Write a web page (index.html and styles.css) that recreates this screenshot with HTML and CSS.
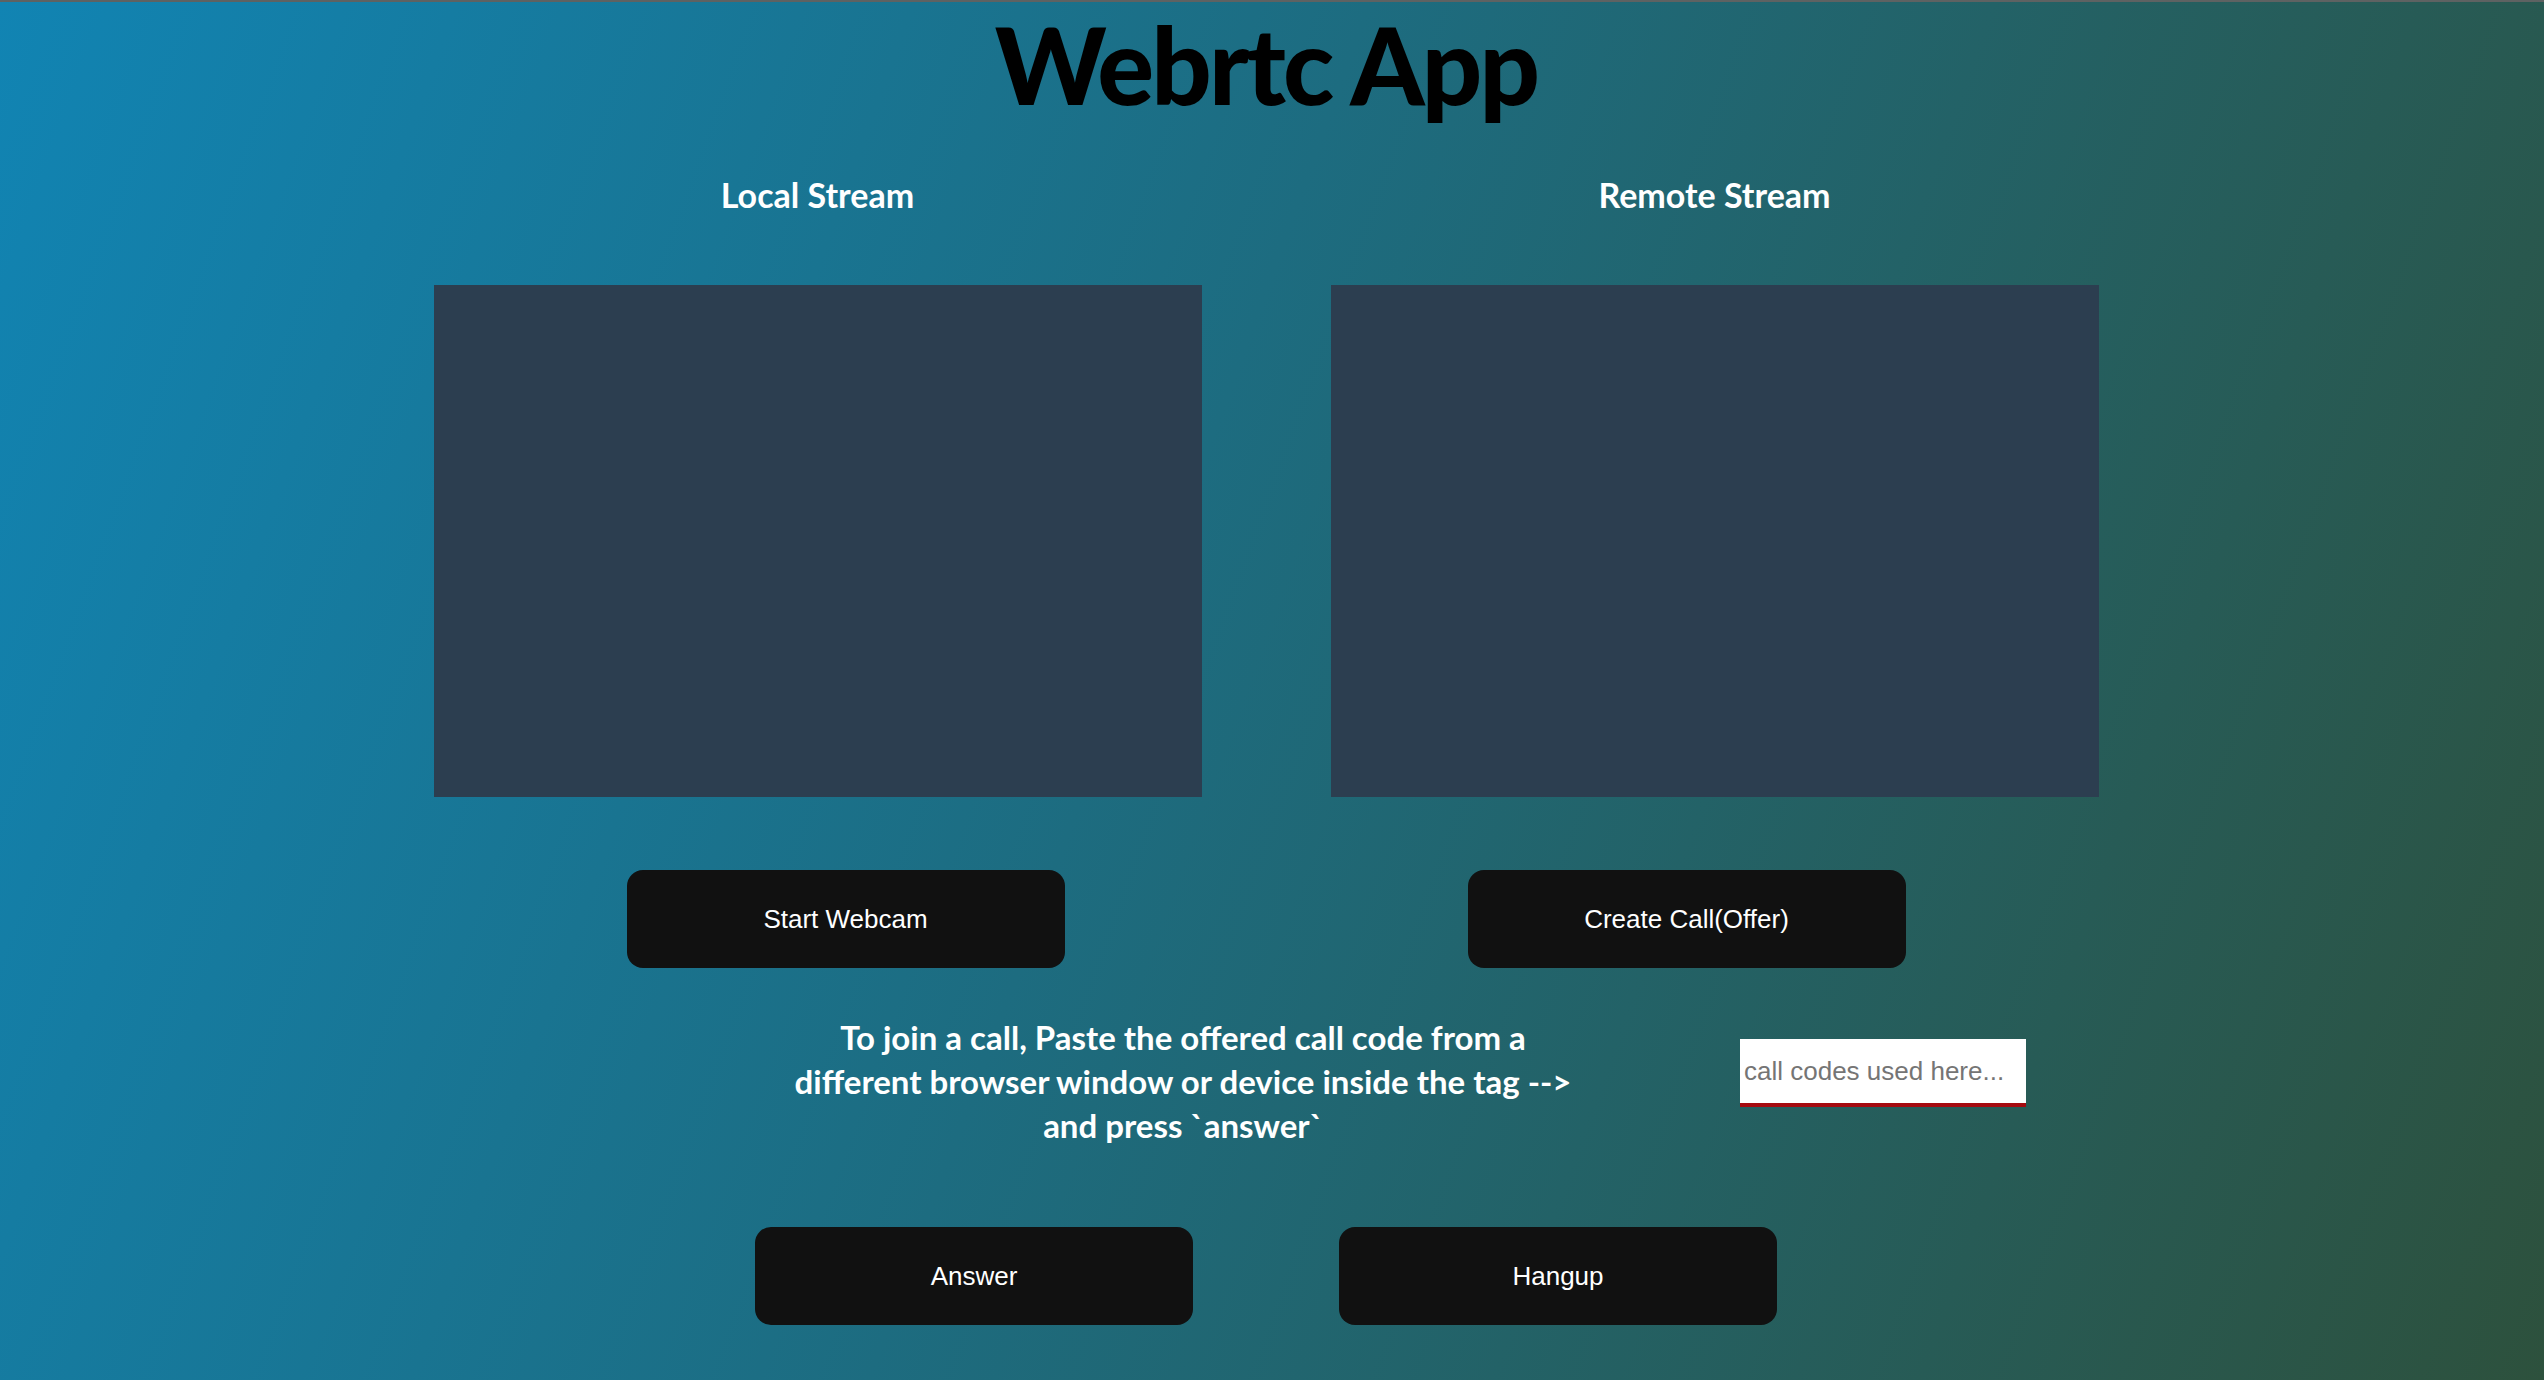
FILE: index.html
```html
<!DOCTYPE html>
<html lang="en">
<head>
<meta charset="utf-8">
<title>Webrtc App</title>
<link rel="stylesheet" href="styles.css">
</head>
<body>
<div class="topline"></div>
<main class="app">
  <h1 class="title">Webrtc App</h1>
  <section class="streams">
    <div class="stream">
      <h3 class="stream-title">Local Stream</h3>
      <div class="video"></div>
    </div>
    <div class="stream">
      <h3 class="stream-title">Remote Stream</h3>
      <div class="video"></div>
    </div>
  </section>
  <div class="btn-row btn-row-top">
    <button class="btn">Start Webcam</button>
    <button class="btn">Create Call(Offer)</button>
  </div>
  <div class="join-row">
    <p class="join-text">To join a call, Paste the offered call code from a different browser window or device inside the tag --&gt; and press `answer`</p>
    <input class="call-input" type="text" placeholder="call codes used here...">
  </div>
  <div class="btn-row btn-row-bottom">
    <button class="btn">Answer</button>
    <button class="btn">Hangup</button>
  </div>
</main>
</body>
</html>
```
FILE: styles.css
```css
html, body {
  margin: 0;
  padding: 0;
  height: 100%;
}
body {
  background: linear-gradient(110deg, #1184b3 0%, #1d6c80 45%, #2d513d 100%);
  font-family: "Lato", "Liberation Sans", sans-serif;
  overflow: hidden;
}
.topline {
  height: 2px;
  background: #5e6262;
}
.app {
  padding-right: 12px;
  display: flex;
  flex-direction: column;
  align-items: center;
}
.title {
  margin: 0;
  font-family: "Lato", sans-serif;
  font-weight: 900;
  font-size: 106px;
  line-height: 124px;
  color: #000;
  letter-spacing: -2.8px;
}
.streams {
  margin-top: 49px;
  display: flex;
  gap: 129px;
}
.stream {
  display: flex;
  flex-direction: column;
  align-items: center;
}
.stream-title {
  margin: 0;
  font-family: "Lato", sans-serif;
  font-weight: 700;
  font-size: 34px;
  line-height: 40px;
  color: #fff;
}
.video {
  margin-top: 70px;
  width: 768px;
  height: 512px;
  background: #2c3e50;
}
.btn-row {
  display: flex;
}
.btn-row-top {
  margin-top: 73px;
  gap: 403px;
}
.btn-row-bottom {
  margin-top: 80px;
  gap: 146px;
}
.btn {
  width: 438px;
  height: 98px;
  border: none;
  border-radius: 16px;
  background: #111;
  color: #fff;
  font-family: "Liberation Sans", Arial, sans-serif;
  font-size: 26px;
  cursor: pointer;
}
.join-row {
  margin-top: 47px;
  align-self: stretch;
  display: flex;
  align-items: flex-start;
  padding-left: 783px;
  gap: 157px;
}
.join-text {
  margin: 0;
  width: 800px;
  text-align: center;
  font-family: "Lato", sans-serif;
  font-weight: 700;
  font-size: 33px;
  line-height: 44px;
  color: #fff;
}
.call-input {
  margin-top: 24px;
  box-sizing: border-box;
  width: 286px;
  height: 68px;
  border: none;
  border-bottom: 4px solid #a50a10;
  padding: 0 4px;
  background: #fff;
  font-family: "Liberation Sans", Arial, sans-serif;
  font-size: 26px;
  color: #333;
  outline: none;
}
.call-input::placeholder {
  color: #757575;
}
```
